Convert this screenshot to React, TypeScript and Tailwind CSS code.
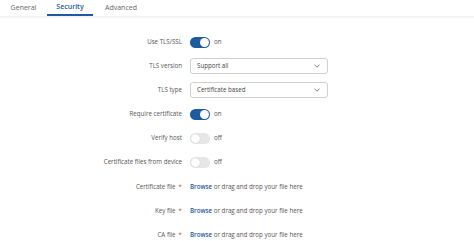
import React from "react";

function Toggle({ on }: { on: boolean }) {
  return on ? (
    <div className="flex h-[11px] w-[20px] items-center justify-end rounded-full bg-[#1d5a9e] pr-[1px]">
      <div className="h-[9px] w-[9px] rounded-full bg-white" />
    </div>
  ) : (
    <div className="flex h-[11px] w-[20px] items-center justify-start rounded-full bg-[#e6e6e6] pl-[1px]">
      <div className="h-[9px] w-[9px] rounded-full bg-white shadow-[0_0_1px_rgba(0,0,0,0.25)]" />
    </div>
  );
}

function Row({ label, children, req }: { label: string; children: React.ReactNode; req?: boolean }) {
  return (
    <div className="flex h-[24px] items-center">
      <div className="flex w-[190px] items-center justify-end pr-[8px] text-[#555]">
        <span>{label}</span>
        {req && <span className="ml-[3px] text-[#d9534f]">*</span>}
      </div>
      <div className="flex items-center">{children}</div>
    </div>
  );
}

function Select({ value }: { value: string }) {
  return (
    <div className="flex h-[16px] w-[138px] items-center justify-between rounded-[3px] border border-[#d0d0d0] bg-white pl-[6px] pr-[7px] text-[#444]">
      <span>{value}</span>
      <svg width="6" height="4" viewBox="0 0 6 4" fill="none">
        <path d="M0.5 0.8 L3 3.2 L5.5 0.8" stroke="#777" strokeWidth="0.9" />
      </svg>
    </div>
  );
}

function Switch({ on }: { on: boolean }) {
  return (
    <div className="flex items-center gap-[4px]">
      <Toggle on={on} />
      <span className="text-[#555]">{on ? "on" : "off"}</span>
    </div>
  );
}

function File() {
  return (
    <div className="text-[#555]">
      <span className="font-semibold text-[#1d5a9e]">Browse</span> or drag and drop your file here
    </div>
  );
}

export default function App() {
  return (
    <div className="h-[241px] w-[474px] overflow-hidden bg-white text-[6.2px] leading-none" style={{ fontFamily: '"Open Sans", sans-serif' }}>
      <div className="flex h-[16px] items-start text-[7px]">
        <div className="flex h-[16px] w-[47px] items-center justify-center pb-[2px] text-[#666]">General</div>
        <div className="flex h-[16px] w-[46px] flex-col items-center justify-between">
          <div className="flex flex-1 items-center pb-[1px] font-semibold text-[#1d5a9e]">Security</div>
          <div className="h-[2px] w-full bg-[#1d5a9e]" />
        </div>
        <div className="flex h-[16px] w-[56px] items-center justify-center pb-[2px] text-[#666]">Advanced</div>
      </div>
      <div className="h-[3px] w-full bg-gradient-to-b from-[#f0f0f0] to-white" />
      <div className="pt-[11px]">
        <Row label="Use TLS/SSL"><Switch on={true} /></Row>
        <Row label="TLS version"><Select value="Support all" /></Row>
        <Row label="TLS type"><Select value="Certificate based" /></Row>
        <Row label="Require certificate"><Switch on={true} /></Row>
        <Row label="Verify host"><Switch on={false} /></Row>
        <Row label="Certificate files from device"><Switch on={false} /></Row>
        <div className="h-[1px]" />
        <Row label="Certificate file" req><File /></Row>
        <Row label="Key file" req><File /></Row>
        <Row label="CA file" req><File /></Row>
      </div>
    </div>
  );
}
